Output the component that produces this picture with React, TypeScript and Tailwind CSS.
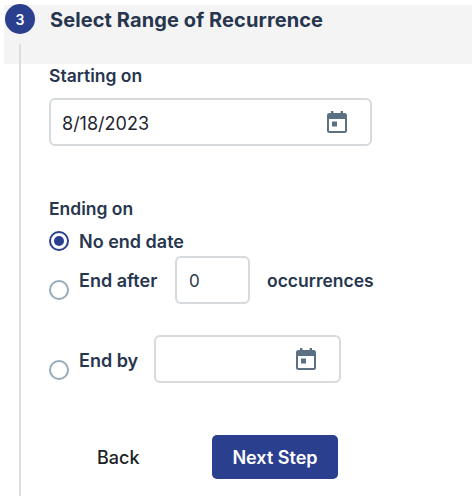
const font = { fontFamily: "Inter, 'Noto Sans', sans-serif" };

function CalendarIcon() {
  return (
    <svg viewBox="0 0 20 22" className="w-[20px] h-[22px] shrink-0" fill="none">
      <rect x="4" y="0" width="2.4" height="4" fill="#5b7083" />
      <rect x="13.6" y="0" width="2.4" height="4" fill="#5b7083" />
      <rect x="1" y="3" width="18" height="18" rx="1.5" stroke="#5b7083" strokeWidth="2" />
      <rect x="1" y="3" width="18" height="5" fill="#5b7083" />
      <rect x="5" y="10.5" width="5" height="5" fill="#5b7083" />
    </svg>
  );
}

function Radio({ checked }: { checked?: boolean }) {
  return (
    <span
      className={
        checked
          ? "w-[20px] h-[20px] rounded-full border-[2.5px] border-[#2b3f8f] flex items-center justify-center shrink-0"
          : "block w-[20px] h-[20px] rounded-full border-[2.5px] border-[#95abbb] shrink-0"
      }
    >
      {checked && <span className="w-[10px] h-[10px] rounded-full bg-[#2b3f8f]" />}
    </span>
  );
}

export default function App() {
  return (
    <div className="relative w-[474px] h-[496px] overflow-hidden bg-white text-[#27364e]" style={font}>
      {/* rail + step badge */}
      <div className="absolute left-[19px] top-[44px] bottom-0 w-[1.5px] bg-[#dcdfe2]" />
      <div className="absolute left-[5px] top-[4px] w-[30px] h-[30px] rounded-full bg-[#2b3f8f] text-white text-[14px] font-semibold flex items-center justify-center">
        3
      </div>

      <div className="mt-[5px] ml-[4px] w-[468px] h-[59px] bg-[#f4f4f4] pl-[46px] pt-[1px]">
        <h2 className="text-[20px] leading-[28px] font-bold tracking-[0.1px]">Select Range of Recurrence</h2>
      </div>

      <div className="pl-[49px]">
        <div className="mt-[2px] h-[20px] text-[17.5px] leading-[20px] font-semibold">Starting on</div>

        <div className="mt-[12px] w-[323px] h-[48px] border-2 border-[#d6dadd] rounded-[6px] flex items-center justify-between pl-[11px] pr-[23px]">
          <span className="text-[18px] leading-[24px] pt-[3px] text-[#1f2430]">8/18/2023</span>
          <CalendarIcon />
        </div>

        <div className="mt-[53px] h-[20px] text-[17.5px] leading-[20px] font-semibold">Ending on</div>

        <label className="mt-[11px] flex items-center gap-[10px] h-[22px]">
          <Radio checked />
          <span className="text-[18px] font-semibold">No end date</span>
        </label>

        <div className="mt-[4px] flex items-start h-[48px]">
          <span className="mt-[24px]"><Radio /></span>
          <span className="ml-[10px] mt-[13px] text-[18px] leading-[24px] font-semibold w-[96px]">End after</span>
          <div className="w-[75px] h-[48px] border-2 border-[#d6dadd] rounded-[6px] flex items-center pl-[12px] pt-[3px] text-[17px] text-[#2e3a4a]">0</div>
          <span className="ml-[17px] mt-[13px] text-[17.5px] leading-[24px] font-semibold">occurrences</span>
        </div>

        <div className="mt-[31px] flex items-start h-[48px]">
          <span className="mt-[25px]"><Radio /></span>
          <span className="ml-[10px] mt-[14px] text-[18px] leading-[24px] font-semibold w-[75px]">End by</span>
          <div className="w-[187px] h-[48px] border-2 border-[#d6dadd] rounded-[6px] flex items-center justify-end pr-[23px]">
            <CalendarIcon />
          </div>
        </div>

        <div className="mt-[52px] flex items-center">
          <button className="ml-[48px] w-[115px] text-left text-[18px] font-medium text-[#1c1f26]">Back</button>
          <button className="w-[126px] h-[44px] rounded-[5px] bg-[#2b3f8f] text-white text-[18px] font-semibold">Next Step</button>
        </div>
      </div>
    </div>
  );
}
